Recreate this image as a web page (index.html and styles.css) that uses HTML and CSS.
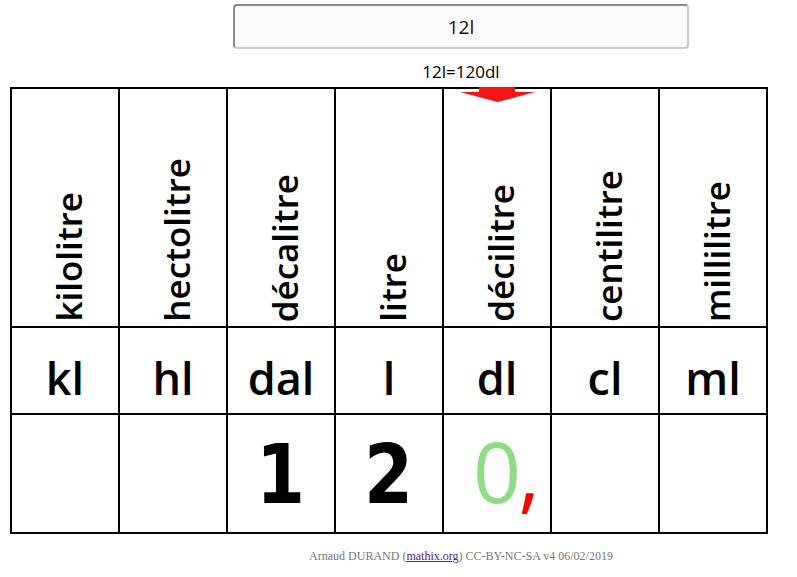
FILE: index.html
```html
<!DOCTYPE html>
<html lang="fr">
<head>
<meta charset="utf-8">
<title>Tableau de conversion</title>
<link rel="stylesheet" href="styles.css">
</head>
<body>
<div class="page">
  <div class="top">
    <input class="entry" type="text" value="12l">
    <div class="result">12l=120dl</div>
  </div>
  <div class="grid">
    <div class="vcell"><span class="vtext">kilolitre</span></div>
    <div class="vcell"><span class="vtext">hectolitre</span></div>
    <div class="vcell"><span class="vtext">décalitre</span></div>
    <div class="vcell"><span class="vtext">litre</span></div>
    <div class="vcell"><span class="vtext">décilitre</span></div>
    <div class="vcell"><span class="vtext">centilitre</span></div>
    <div class="vcell"><span class="vtext">millilitre</span></div>

    <div class="ucell">kl</div>
    <div class="ucell">hl</div>
    <div class="ucell">dal</div>
    <div class="ucell">l</div>
    <div class="ucell">dl</div>
    <div class="ucell">cl</div>
    <div class="ucell">ml</div>

    <div class="dcell"></div>
    <div class="dcell"></div>
    <div class="dcell"><span class="digit">1</span></div>
    <div class="dcell"><span class="digit">2</span></div>
    <div class="dcell"><span class="zero">0</span><span class="comma">,</span></div>
    <div class="dcell"></div>
    <div class="dcell"></div>

    <svg class="arrow" width="75" height="15" viewBox="0 0 75 15"><polygon points="19,0 55,0 55,5 75,5 37.5,15 0,5 19,5" fill="#f41414"/></svg>
  </div>
  <div class="footer">Arnaud DURAND (<a href="#">mathix.org</a>) CC-BY-NC-SA v4 06/02/2019</div>
</div>
</body>
</html>
```

FILE: styles.css
```css
html, body {
  margin: 0;
  padding: 0;
  background: #fff;
  overflow: hidden;
}

.page {
  padding: 4px 0 0 10px;
}

.top {
  width: 456px;
  margin-left: 223px;
}

.entry {
  display: block;
  box-sizing: border-box;
  width: 456px;
  height: 45px;
  margin: 0;
  padding: 0;
  border: 2px solid #8a8a8a;
  border-right-color: #cbcbcb;
  border-bottom-color: #cbcbcb;
  border-radius: 4px;
  background: #fafafa;
  font-family: "Open Sans", sans-serif;
  font-size: 19px;
  color: #111;
  text-align: center;
  outline: none;
}

.result {
  height: 38px;
  box-sizing: border-box;
  display: flex;
  align-items: flex-end;
  justify-content: center;
  padding-bottom: 5px;
  font-family: "Open Sans", sans-serif;
  font-size: 17px;
  line-height: 20px;
  color: #000;
}

.grid {
  position: relative;
  width: max-content;
  display: grid;
  grid-template-columns: repeat(7, 106px);
  grid-template-rows: 237px 85px 117px;
  gap: 2px;
  padding: 2px;
  background: #000;
}

.vcell, .ucell, .dcell {
  background: #fff;
}

.vcell {
  display: flex;
  flex-direction: column;
  justify-content: flex-end;
  align-items: center;
  box-sizing: border-box;
  padding: 0 0 4px 8px;
}

.vtext {
  writing-mode: vertical-rl;
  transform: rotate(180deg);
  font-family: "Open Sans", sans-serif;
  font-weight: 600;
  font-size: 35px;
  line-height: 36px;
  color: #000;
  white-space: nowrap;
}

.ucell {
  display: flex;
  align-items: center;
  justify-content: center;
  box-sizing: border-box;
  padding-top: 14px;
  font-family: "Open Sans", sans-serif;
  font-weight: 600;
  font-size: 45px;
  line-height: 1;
  color: #000;
}

.dcell {
  box-sizing: border-box;
  padding-top: 3px;
  text-align: center;
  font-family: "DejaVu Sans", sans-serif;
  font-weight: bold;
  font-size: 82px;
  line-height: 114px;
  color: #000;
}

.digit {
  display: inline-block;
  transform: scaleX(0.86);
}

.zero {
  font-family: "Open Sans", sans-serif;
  font-weight: normal;
  font-size: 84px;
  line-height: 0;
  color: #8fdc87;
}

.comma {
  font-family: "Open Sans", sans-serif;
  font-weight: normal;
  font-size: 84px;
  line-height: 0;
  color: #ff0000;
  margin-left: -3px;
  margin-right: -19px;
}

.arrow {
  position: absolute;
  left: 450px;
  top: 0;
}

.footer {
  width: 456px;
  margin: 15px 0 0 223px;
  text-align: center;
  font-family: "Liberation Serif", serif;
  font-size: 12px;
  line-height: 15px;
  color: #777;
}

.footer a {
  color: #551a8b;
}
```
